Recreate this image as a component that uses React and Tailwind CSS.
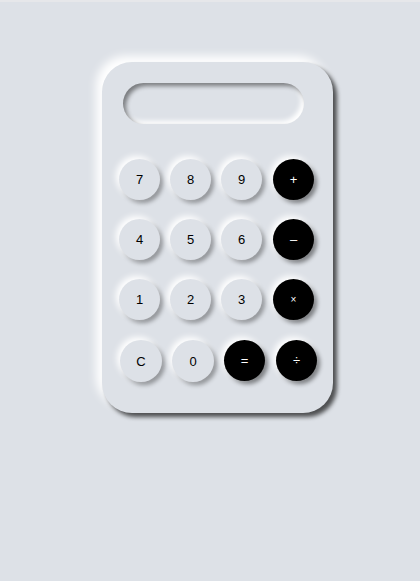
import React from "react";

const light =
  "bg-[#dde1e7] text-black shadow-[-3px_-3px_6px_#ffffff,3px_3px_4px_rgba(0,0,0,0.35)]";
const dark =
  "bg-black text-white shadow-[-3px_-3px_6px_#ffffff,3px_3px_4px_rgba(0,0,0,0.45)]";

function Btn({ label, kind = "light", size = "w-[41px] h-[41px]", cls = "" }) {
  return (
    <button
      className={`${size} rounded-full flex items-center justify-center text-[13px] leading-none ${
        kind === "dark" ? dark : light
      } ${cls}`}
      style={{ fontFamily: '"Liberation Sans", Arial, sans-serif' }}
    >
      {label}
    </button>
  );
}

export default function App() {
  return (
    <div className="w-[420px] h-[581px] bg-[#dde1e7] border-t-2 border-[#e6e7ea] overflow-hidden">
      <div className="pt-[60px] pl-[102px]">
        <div className="w-[231px] h-[351px] rounded-[30px] bg-[#dde1e7] shadow-[4px_4px_4px_rgba(0,0,0,0.65),-6px_-6px_10px_#ffffff] pt-[21px]">
          <div className="ml-[21px] w-[181px] h-[41px] rounded-full bg-[#dde1e7] shadow-[inset_3px_3px_4px_rgba(0,0,0,0.45),inset_-3px_-3px_5px_#ffffff]" />
          <div className="mt-[35px] ml-[17px] flex flex-col gap-[19px]">
            <div className="flex gap-[10px]">
              <Btn label="7" />
              <Btn label="8" />
              <Btn label="9" />
              <Btn label="+" kind="dark" cls="ml-[1px]" />
            </div>
            <div className="flex gap-[10px]">
              <Btn label="4" />
              <Btn label="5" />
              <Btn label="6" />
              <Btn label="–" kind="dark" cls="ml-[1px]" />
            </div>
            <div className="flex gap-[10px]">
              <Btn label="1" />
              <Btn label="2" />
              <Btn label="3" />
              <Btn label={<span className="text-[10px]">×</span>} kind="dark" cls="ml-[1px]" />
            </div>
            <div className="flex gap-[10px] ml-[1px] mt-[1px]">
              <Btn label="C" size="w-[42px] h-[42px]" />
              <Btn label="0" size="w-[42px] h-[42px]" />
              <Btn label="=" kind="dark" size="w-[41px] h-[41px]" />
              <Btn label="÷" kind="dark" size="w-[41px] h-[41px]" cls="ml-[1px]" />
            </div>
          </div>
        </div>
      </div>
    </div>
  );
}
